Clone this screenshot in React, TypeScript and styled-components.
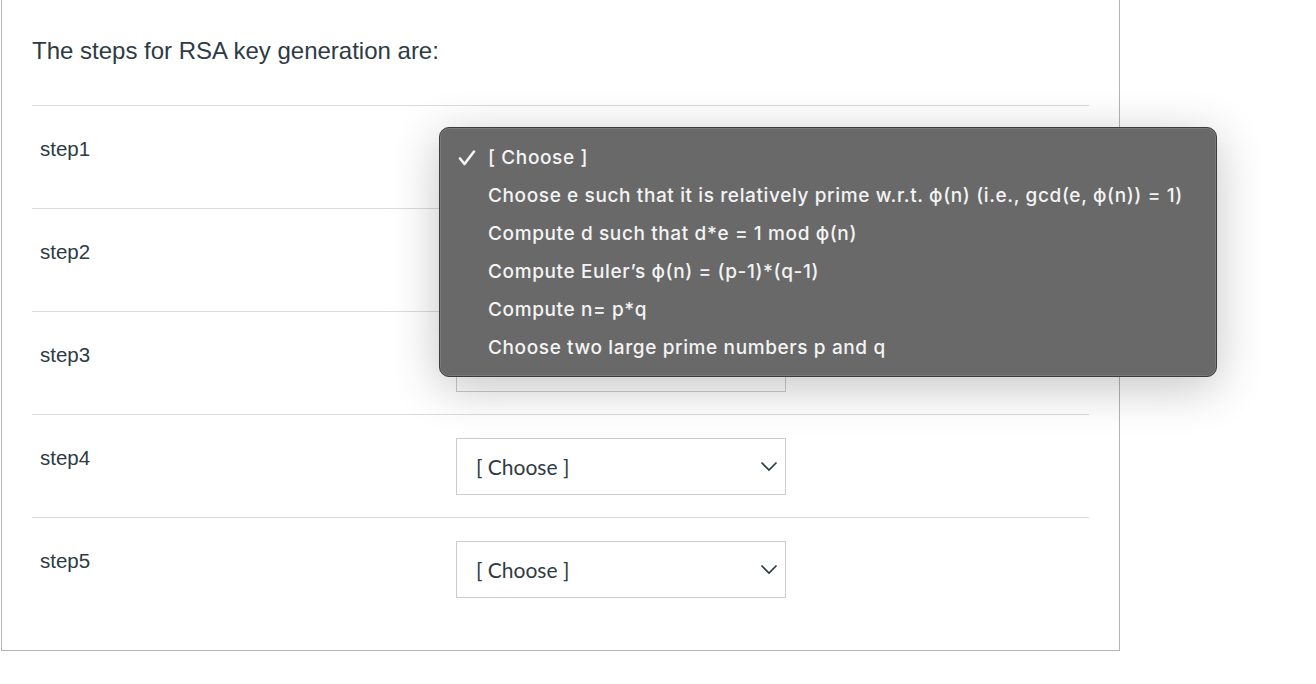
import { createGlobalStyle } from 'styled-components';
import styled from 'styled-components';

const GlobalStyle = createGlobalStyle`
  html, body {
    margin: 0;
    padding: 0;
    background: #ffffff;
  }
`

const Page = styled.div`
  width: 1316px;
  height: 684px;
  padding-left: 1px;
  box-sizing: border-box;
  overflow: hidden;
`

const Card = styled.div`
  width: 1119px;
  box-sizing: border-box;
  border: 1px solid #b4b4b4;
  border-top: none;
  padding: 0 30px 30px 30px;
  font-family: "Liberation Sans", Arial, sans-serif;
  color: #2d3b45;
`

const Title = styled.div`
  font-size: 24px;
  line-height: 28px;
  padding-top: 37px;
  padding-bottom: 40px;
`

const Row = styled.div`
  display: grid;
  grid-template-columns: 424px 1fr;
  height: 103px;
  box-sizing: border-box;
  border-top: 1px solid #dcdcdc;
`

const Label = styled.div`
  font-size: 20.5px;
  line-height: 22px;
  padding: 32px 0 0 8px;
`

const SelectWrap = styled.div`
  position: relative;
  padding-top: 23px;
`

const SelectBox = styled.div`
  width: 330px;
  height: 57px;
  box-sizing: border-box;
  border: 1px solid #c7cdd1;
  display: flex;
  align-items: center;
  justify-content: space-between;
  padding: 0 7px 0 19px;
  font-family: Lato, "Liberation Sans", sans-serif;
  font-size: 21px;
  color: #2d3b45;
  background: #fff;
`

// open dropdown list, drawn over the first select
const Menu = styled.div`
  position: absolute;
  left: -17px;
  top: 21px;
  width: 778px;
  box-sizing: border-box;
  padding: 10px 0;
  background: #696969;
  border: 1px solid #3c3c3c;
  border-radius: 10px;
  box-shadow: inset 0 0 0 1px #7c7c7c, 0 10px 48px rgba(0, 0, 0, 0.24);
  font-family: Inter, "Open Sans", sans-serif;
  font-size: 19px;
  font-weight: 500;
  letter-spacing: 0.62px;
  color: #f4f4f4;
  z-index: 10;
`

const MenuItem = styled.div`
  display: flex;
  align-items: center;
  height: 38px;
  padding-left: 48px;
  position: relative;
  white-space: nowrap;
`

const Check = styled.svg`
  position: absolute;
  left: 18px;
  top: 12px;
`

const options = [
  'Choose e such that it is relatively prime w.r.t. \u03d5(n) (i.e., gcd(e, \u03d5(n)) = 1)',
  'Compute d such that d*e = 1 mod \u03d5(n)',
  'Compute Euler\u2019s \u03d5(n) = (p-1)*(q-1)',
  'Compute n= p*q',
  'Choose two large prime numbers p and q',
];

function Chevron() {
  return (
    <svg width="18" height="11" viewBox="0 0 18 11">
      <path d="M1.5 1.5 L9 9 L16.5 1.5" fill="none" stroke="#2d3b45" strokeWidth="1.7" />
    </svg>
  );
}

function App() {
  const steps = ['step1', 'step2', 'step3', 'step4', 'step5'];
  return (
    <Page>
      <GlobalStyle />
      <Card>
        <Title>The steps for RSA key generation are:</Title>
        {steps.map((s, i) => (
          <Row key={s}>
            <Label>{s}</Label>
            <SelectWrap>
              <SelectBox>
                <span>[ Choose ]</span>
                <Chevron />
              </SelectBox>
              {i === 0 && (
                <Menu>
                  <MenuItem>
                    <Check width="18" height="16" viewBox="0 0 18 16">
                      <path d="M2 8.5 L6.5 14 L16 1.5" fill="none" stroke="#f4f4f4" strokeWidth="2.6" strokeLinecap="round" strokeLinejoin="round" />
                    </Check>
                    [ Choose ]
                  </MenuItem>
                  {options.map((o) => (
                    <MenuItem key={o}>{o}</MenuItem>
                  ))}
                </Menu>
              )}
            </SelectWrap>
          </Row>
        ))}
      </Card>
    </Page>
  );
}

export default App;
